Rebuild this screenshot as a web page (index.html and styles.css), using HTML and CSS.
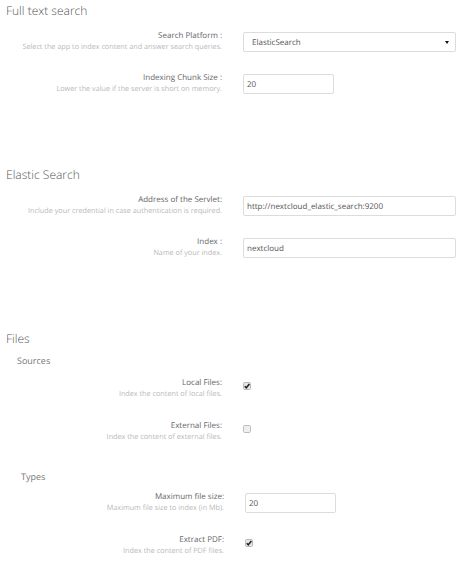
FILE: index.html
```html
<!DOCTYPE html>
<html>
<head>
<meta charset="utf-8">
<link rel="stylesheet" href="styles.css">
</head>
<body>
<section class="block">
  <h2 class="block-title">Full text search</h2>
  <div class="rows">
    <div class="row">
      <div class="info">
        <div class="label">Search Platform :</div>
        <div class="desc">Select the app to index content and answer search queries.</div>
      </div>
      <div class="select select-wide"><span>ElasticSearch</span><span class="caret"></span></div>
    </div>
    <div class="row">
      <div class="info">
        <div class="label">Indexing Chunk Size :</div>
        <div class="desc">Lower the value if the server is short on memory.</div>
      </div>
      <div class="input input-small">20</div>
    </div>
  </div>
</section>

<section class="block">
  <h2 class="block-title">Elastic Search</h2>
  <div class="rows">
    <div class="row">
      <div class="info">
        <div class="label">Address of the Servlet:</div>
        <div class="desc">Include your credential in case authentication is required.</div>
      </div>
      <div class="input input-wide">http://nextcloud_elastic_search:9200</div>
    </div>
    <div class="row">
      <div class="info">
        <div class="label">Index :</div>
        <div class="desc">Name of your index.</div>
      </div>
      <div class="input input-wide">nextcloud</div>
    </div>
  </div>
</section>

<section class="block">
  <h2 class="block-title">Files</h2>
  <div class="group group-sources">
    <h3 class="group-title">Sources</h3>
    <div class="rows rows-files">
      <div class="row">
        <div class="info">
          <div class="label">Local Files:</div>
          <div class="desc">Index the content of local files.</div>
        </div>
        <span class="check checked"><svg viewBox="0 0 8 8" width="8" height="8"><rect x="0.5" y="0.5" width="7" height="7" rx="1.2" fill="#e6e6e6" stroke="#b9b9b9"/><path d="M1.8 4.2 L3.3 5.8 L6.4 2" fill="none" stroke="#222" stroke-width="1.5"/></svg></span>
      </div>
      <div class="row">
        <div class="info">
          <div class="label">External Files:</div>
          <div class="desc">Index the content of external files.</div>
        </div>
        <span class="check"><svg viewBox="0 0 8 8" width="8" height="8"><rect x="0.5" y="0.5" width="7" height="7" rx="1.2" fill="#efefef" stroke="#bdbdbd"/></svg></span>
      </div>
    </div>
  </div>
  <div class="group group-types">
    <h3 class="group-title">Types</h3>
    <div class="rows rows-files">
      <div class="row">
        <div class="info">
          <div class="label">Maximum file size:</div>
          <div class="desc">Maximum file size to index (in Mb).</div>
        </div>
        <div class="input input-small">20</div>
      </div>
      <div class="row">
        <div class="info">
          <div class="label">Extract PDF:</div>
          <div class="desc">Index the content of PDF files.</div>
        </div>
        <span class="check checked"><svg viewBox="0 0 8 8" width="8" height="8"><rect x="0.5" y="0.5" width="7" height="7" rx="1.2" fill="#e6e6e6" stroke="#b9b9b9"/><path d="M1.8 4.2 L3.3 5.8 L6.4 2" fill="none" stroke="#222" stroke-width="1.5"/></svg></span>
      </div>
    </div>
  </div>
</section>
</body>
</html>
```

FILE: styles.css
```css
html, body {
  background: #ffffff;
}
body {
  margin: 0;
  padding-top: 1px;
  font-family: "Open Sans", "DejaVu Sans", sans-serif;
  color: #555;
  text-rendering: geometricPrecision;
}
.block + .block {
  margin-top: 70px;
}
.block-title {
  margin: 0;
  padding-left: 6px;
  font-size: 12px;
  line-height: 20px;
  font-weight: 300;
  color: #555;
}
.rows {
  display: flex;
  flex-direction: column;
  gap: 19px;
  margin-top: 9px;
}
.row {
  display: grid;
  grid-template-columns: 222px auto;
  column-gap: 21px;
  align-items: start;
}
.info {
  text-align: right;
}
.label {
  font-size: 8px;
  line-height: 11px;
  color: #666;
}
.desc {
  font-size: 7.25px;
  line-height: 12px;
  color: #b8b8b8;
}
.input, .select {
  box-sizing: border-box;
  margin-top: 2px;
  height: 20px;
  border: 1px solid #dcdcdc;
  border-radius: 2px;
  background: #fff;
  font-size: 8px;
  line-height: 19px;
  color: #555;
  padding: 0 3px;
}
.select {
  display: flex;
  justify-content: space-between;
  align-items: center;
  padding: 1px 6px 0 8px;
}
.caret {
  width: 0;
  height: 0;
  border-left: 2.5px solid transparent;
  border-right: 2.5px solid transparent;
  border-top: 3px solid #111;
}
.select-wide, .input-wide {
  width: 213px;
}
.input-small {
  width: 91px;
}
.check {
  display: block;
  margin-top: 5px;
  width: 8px;
  height: 8px;
}
.check svg {
  display: block;
}
.group-title {
  margin: 0;
  font-size: 9px;
  line-height: 14px;
  font-weight: 400;
  color: #777;
}
.group-sources .group-title {
  margin-top: 5px;
  padding-left: 17px;
}
.group-types {
  margin-top: 27px;
}
.group-types .group-title {
  padding-left: 21px;
}
.rows-files {
  gap: 20px;
  margin-top: 9px;
}
.group-types .rows-files {
  margin-top: 7px;
}
.group-types .row {
  grid-template-columns: 224px auto;
}
```
